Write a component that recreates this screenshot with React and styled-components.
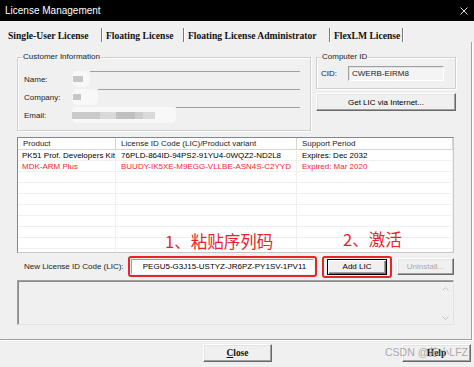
import React from 'react';
import styled, { createGlobalStyle } from 'styled-components';

const Global = createGlobalStyle`
  html, body { margin: 0; padding: 0; background: #f0f0f0; }
  body { font-family: "Liberation Sans", Arial, sans-serif; }
  * { box-sizing: border-box; }
`;

const Window = styled.div`
  position: relative;
  width: 474px;
  height: 367px;
  overflow: hidden;
  background: #f0f0f0;
  font-family: "Liberation Sans", Arial, sans-serif;
  font-size: 8px;
  color: #000;
  display: flex;
  flex-direction: column;
`;

const TitleBar = styled.div`
  height: 21px;
  flex: none;
  background: #000;
  color: #fff;
  display: flex;
  align-items: center;
  justify-content: space-between;
  padding: 0 6px 0 5px;
  font-size: 10px;
`;

const TabStrip = styled.div`
  height: 21px;
  flex: none;
  display: flex;
  align-items: flex-end;
  padding-left: 4px;
`;

const Tab = styled.div`
  width: ${p => p.$w}px;
  height: 14px;
  display: flex;
  align-items: center;
  padding-left: 4px;
  border-right: 1px solid #7a7a7a;
  box-shadow: 1px 0 0 #fff;
  font-family: "Liberation Serif", "Times New Roman", serif;
  font-weight: bold;
  font-size: 9.6px;
  color: #111;
  white-space: nowrap;
  overflow: hidden;
`;

const Panel = styled.div`
  width: 472px;
  height: 298px;
  flex: none;
  border-right: 1px solid #a0a0a0;
  border-bottom: 1px solid #a0a0a0;
  box-shadow: 1px 1px 0 #fff;
  padding: 15px 0 0 17px;
  display: flex;
  flex-direction: column;
`;

const TopSection = styled.div`
  display: flex;
  align-items: flex-start;
  gap: 5px;
`;

const GroupBox = styled.div`
  position: relative;
  width: ${p => p.$w}px;
  height: ${p => p.$h}px;
  border: 1px solid #cfcfcf;
  box-shadow: inset 1px 1px 0 #fff, 1px 1px 0 #fff;
`;

const Legend = styled.span`
  position: absolute;
  top: -6px;
  left: 4px;
  padding: 0 1px;
  background: #f0f0f0;
  line-height: 10px;
  color: #222;
`;

const CustomerGrid = styled.div`
  display: grid;
  grid-template-columns: 48px 228px;
  grid-auto-rows: 16px;
  row-gap: 2px;
  padding: 13px 0 0 6px;
`;

const FieldLabel = styled.div`
  display: flex;
  align-items: center;
  padding-top: 1px;
  color: #222;
`;

const FieldCell = styled.div`
  display: flex;
  align-items: flex-start;
`;

const Obscured = styled.div`
  width: ${p => p.$w}px;
  height: 16px;
  display: flex;
  align-items: center;
  background: rgba(255, 255, 255, 0.55);
  border-radius: 5px;
  filter: blur(0.6px);
`;

const Mosaic = styled.span`
  width: ${p => p.$w}px;
  height: ${p => p.$h}px;
  background: ${p => p.$c};
  flex: none;
`;

const FieldLine = styled.div`
  flex: 1;
  height: 14px;
  border-top: 1px solid #a0a0a0;
`;

const RightCol = styled.div`
  width: 140px;
  display: flex;
  flex-direction: column;
  gap: 4px;
`;

const CidRow = styled.div`
  display: flex;
  align-items: center;
  padding: 8px 0 0 4px;
  color: #222;
`;

const CidLabel = styled.span`
  width: 27px;
`;

const CidBox = styled.div`
  width: 96px;
  height: 15px;
  border: 1px solid;
  border-color: #a0a0a0 #fff #fff #a0a0a0;
  box-shadow: inset 1px 1px 0 #e3e3e3;
  padding-left: 3px;
  display: flex;
  align-items: center;
  background: #f4f4f4;
`;

const Button3D = styled.button`
  width: ${p => p.$w}px;
  height: ${p => p.$h}px;
  flex: none;
  background: #f0f0f0;
  font-family: "Liberation Sans", Arial, sans-serif;
  font-size: 8px;
  color: ${p => (p.$disabled ? '#a8a8a8' : '#000')};
  border: 1px solid;
  border-color: #fff #696969 #696969 #fff;
  box-shadow: inset -1px -1px 0 #a0a0a0, inset 1px 1px 0 #e3e3e3;
  padding: 0;
  margin: 0;
`;

const DefaultButton = styled(Button3D)`
  border: 1px solid #000;
  box-shadow: inset 1px 1px 0 #fff, inset -1px -1px 0 #696969, inset -2px -2px 0 #a0a0a0;
`;

const FooterButton = styled(Button3D)`
  font-family: "Liberation Serif", "Times New Roman", serif;
  font-weight: bold;
  font-size: 9.4px;
  color: #111;
`;

const TableWrap = styled.div`
  position: relative;
  margin-top: 6px;
  width: 437px;
  height: 116px;
  border: 1px solid #82878f;
  border-right-color: #c8c8c8;
  border-bottom-color: #c8c8c8;
  background: #fff;
  overflow: hidden;
`;

const GridRow = styled.div`
  display: grid;
  grid-template-columns: 98px 181px 1fr;
  height: ${p => (p.$head ? 12 : 11)}px;
  border-bottom: 1px solid ${p => (p.$head ? '#d5d5d5' : '#f0f0f0')};
`;

const HeadCell = styled.div`
  padding-left: 5px;
  border-right: 1px solid #d5d5d5;
  line-height: 11px;
  white-space: nowrap;
  overflow: hidden;
  color: #222;
`;

const Cell = styled.div`
  padding-left: ${p => (p.$first ? 4 : 5)}px;
  border-right: 1px solid #f0f0f0;
  line-height: 11px;
  white-space: nowrap;
  overflow: hidden;
  color: ${p => (p.$red ? '#f5262e' : '#000')};
`;

const Annotation = styled.span`
  position: absolute;
  left: ${p => p.$x}px;
  top: ${p => p.$y}px;
  font-family: "Noto Sans CJK SC", "Liberation Sans", sans-serif;
  font-size: 16.5px;
  line-height: 1;
  color: #e8232b;
  white-space: nowrap;
`;

const LicRow = styled.div`
  margin-top: 3px;
  height: 21px;
  display: flex;
  align-items: center;
`;

const LicLabel = styled.span`
  width: 111px;
  padding-left: 7px;
  color: #222;
  white-space: nowrap;
`;

const RedFrame = styled.div`
  width: ${p => p.$w}px;
  height: ${p => p.$h}px;
  margin-left: ${p => p.$ml || 0}px;
  border: 2px solid #e8232b;
  border-radius: 3px;
  padding: 1px;
  display: flex;
  align-items: center;
  justify-content: center;
`;

const LicInput = styled.div`
  width: 100%;
  height: 100%;
  background: #fff;
  border: 1px solid;
  border-color: #a0a0a0 #fff #fff #a0a0a0;
  display: flex;
  align-items: center;
  justify-content: center;
  padding-left: 4px;
  white-space: nowrap;
`;

const Spacer = styled.div`
  width: ${p => p.$w}px;
  flex: none;
`;

const OutputBox = styled.div`
  margin-top: 3px;
  width: 437px;
  height: 45px;
  border: 1px solid;
  border-color: #a0a0a0 #e3e3e3 #e3e3e3 #a0a0a0;
  box-shadow: inset 1px 1px 0 #8a8a8a;
  display: flex;
  justify-content: flex-end;
`;

const ScrollCol = styled.div`
  width: 15px;
  display: flex;
  flex-direction: column;
  justify-content: space-between;
  align-items: center;
  padding: 6px 0 4px;
`;

const Footer = styled.div`
  flex: 1;
  display: flex;
  align-items: flex-start;
  justify-content: space-between;
  padding: 4px 3px 0 203px;
`;

const Watermark = styled.span`
  position: absolute;
  left: 385px;
  top: 346px;
  font-family: "Liberation Sans", "Noto Sans CJK SC", sans-serif;
  font-size: 10.5px;
  line-height: 12px;
  color: rgba(150, 150, 150, 0.8);
  white-space: nowrap;
`;

const Chevron = ({ up }) => (
  <svg width="7" height="4" viewBox="0 0 7 4">
    <path d={up ? 'M0.5 3.5 L3.5 0.5 L6.5 3.5' : 'M0.5 0.5 L3.5 3.5 L6.5 0.5'} fill="none" stroke="#c4c4c4" strokeWidth="1" />
  </svg>
);

const CloseX = () => (
  <svg width="8" height="8" viewBox="0 0 8 8">
    <path d="M0.5 0.5 L7.5 7.5 M7.5 0.5 L0.5 7.5" stroke="#e6e6e6" strokeWidth="1" />
  </svg>
);

const emptyRows = Array.from({ length: 8 });

export default function App() {
  return (
    <>
      <Global />
      <Window>
        <TitleBar>
          <span>License Management</span>
          <CloseX />
        </TitleBar>
        <TabStrip>
          <Tab $w={98}>Single-User License</Tab>
          <Tab $w={82}>Floating License</Tab>
          <Tab $w={146}>Floating License Administrator</Tab>
          <Tab $w={73}>FlexLM License</Tab>
        </TabStrip>
        <Panel>
          <TopSection>
            <GroupBox $w={294} $h={74}>
              <Legend>Customer Information</Legend>
              <CustomerGrid>
                <FieldLabel>Name:</FieldLabel>
                <FieldCell>
                  <Obscured $w={18}>
                    <Spacer $w={1} />
                    <Mosaic $w={10} $h={6} $c="#c6c6c6" />
                  </Obscured>
                  <FieldLine />
                </FieldCell>
                <FieldLabel>Company:</FieldLabel>
                <FieldCell>
                  <Obscured $w={26}>
                    <Spacer $w={1} />
                    <Mosaic $w={8} $h={6} $c="#c6c6c6" />
                  </Obscured>
                  <FieldLine />
                </FieldCell>
                <FieldLabel>Email:</FieldLabel>
                <FieldCell>
                  <Obscured $w={104}>
                    <Mosaic $w={28} $h={7} $c="#cacaca" />
                    <Mosaic $w={16} $h={7} $c="#d9d9d9" />
                    <Mosaic $w={19} $h={7} $c="#c0c0c0" />
                    <Mosaic $w={8} $h={7} $c="#cdcdcd" />
                    <Mosaic $w={12} $h={7} $c="#dadada" />
                  </Obscured>
                  <FieldLine />
                </FieldCell>
              </CustomerGrid>
            </GroupBox>
            <RightCol>
              <GroupBox $w={140} $h={32}>
                <Legend>Computer ID</Legend>
                <CidRow>
                  <CidLabel>CID:</CidLabel>
                  <CidBox>CWERB-EIRM8</CidBox>
                </CidRow>
              </GroupBox>
              <Button3D $w={140} $h={18}>Get LIC via Internet...</Button3D>
            </RightCol>
          </TopSection>

          <TableWrap>
            <GridRow $head>
              <HeadCell>Product</HeadCell>
              <HeadCell>License ID Code (LIC)/Product variant</HeadCell>
              <HeadCell>Support Period</HeadCell>
            </GridRow>
            <GridRow>
              <Cell $first>PK51 Prof. Developers Kit</Cell>
              <Cell>76PLD-864ID-94PS2-91YU4-0WQZ2-ND2L8</Cell>
              <Cell>Expires: Dec 2032</Cell>
            </GridRow>
            <GridRow>
              <Cell $first $red>MDK-ARM Plus</Cell>
              <Cell $red>BUUDY-IK5XE-M9EGG-VLLBE-ASN4S-C2YYD</Cell>
              <Cell $red>Expired: Mar 2020</Cell>
            </GridRow>
            {emptyRows.map((_, i) => (
              <GridRow key={i}>
                <Cell $first />
                <Cell />
                <Cell />
              </GridRow>
            ))}
            <Annotation $x={147} $y={95}>1、粘贴序列码</Annotation>
            <Annotation $x={325} $y={93}>2、激活</Annotation>
          </TableWrap>

          <LicRow>
            <LicLabel>New License ID Code (LIC):</LicLabel>
            <RedFrame $w={189} $h={21}>
              <LicInput>PEGU5-G3J15-USTYZ-JR6PZ-PY1SV-1PV11</LicInput>
            </RedFrame>
            <RedFrame $w={70} $h={22} $ml={5}>
              <DefaultButton $w={60} $h={16}>Add LIC</DefaultButton>
            </RedFrame>
            <Spacer $w={5} />
            <Button3D $w={57} $h={17} $disabled>Uninstall...</Button3D>
          </LicRow>

          <OutputBox>
            <ScrollCol>
              <Chevron up />
              <Chevron />
            </ScrollCol>
          </OutputBox>
        </Panel>
        <Footer>
          <FooterButton $w={69} $h={18}><u>C</u>lose</FooterButton>
          <FooterButton $w={69} $h={18}>Help</FooterButton>
        </Footer>
        <Watermark>CSDN @苏小LFZ</Watermark>
      </Window>
    </>
  );
}
